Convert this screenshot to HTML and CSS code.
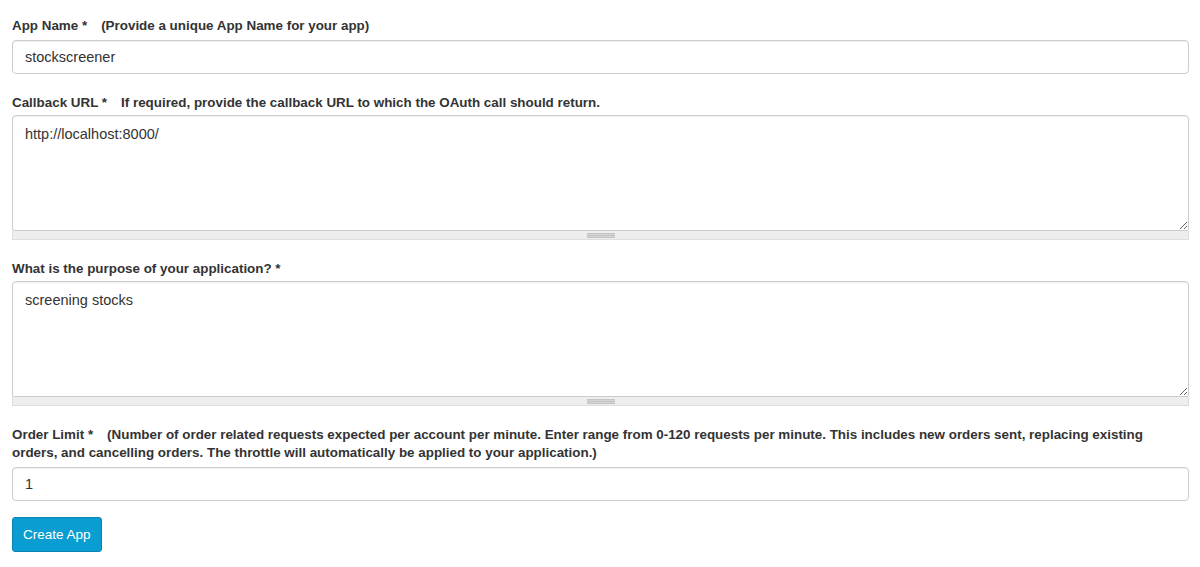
FILE: index.html
```html
<!DOCTYPE html>
<html lang="en">
<head>
<meta charset="utf-8">
<title>Create App</title>
<link rel="stylesheet" href="styles.css">
</head>
<body>
<form class="app-form">
  <div class="field">
    <label class="field-label" for="app-name">App Name *<span class="hint">(Provide a unique App Name for your app)</span></label>
    <input class="text-input" id="app-name" type="text" value="stockscreener">
  </div>
  <div class="field field-area">
    <label class="field-label" for="callback">Callback URL *<span class="hint">If required, provide the callback URL to which the OAuth call should return.</span></label>
    <div class="resizable">
      <textarea class="text-area" id="callback">http://localhost:8000/</textarea>
      <div class="grippie"><span class="grip"></span></div>
    </div>
  </div>
  <div class="field field-area">
    <label class="field-label" for="purpose">What is the purpose of your application? *</label>
    <div class="resizable">
      <textarea class="text-area" id="purpose">screening stocks</textarea>
      <div class="grippie"><span class="grip"></span></div>
    </div>
  </div>
  <div class="field">
    <label class="field-label" for="order-limit">Order Limit *<span class="hint">(Number of order related requests expected per account per minute. Enter range from 0-120 requests per minute. This includes new orders sent, replacing existing orders, and cancelling orders. The throttle will automatically be applied to your application.)</span></label>
    <input class="text-input" id="order-limit" type="text" value="1">
  </div>
  <div class="actions">
    <button class="btn-primary" type="button">Create App</button>
  </div>
</form>
</body>
</html>
```

FILE: styles.css
```css
html, body {
  margin: 0;
  padding: 0;
  background: #ffffff;
}

body {
  font-family: "Liberation Sans", Arial, Helvetica, sans-serif;
  color: #333333;
}

.app-form {
  padding: 15px 11px 0 12px;
  display: flex;
  flex-direction: column;
  gap: 18px;
}

.field {
  display: flex;
  flex-direction: column;
  gap: 5px;
}

.field-area {
  gap: 3px;
}

.field-label {
  display: block;
  padding-top: 2px;
  font-size: 13.4px;
  font-weight: bold;
  line-height: 18px;
  color: #333333;
}

.hint {
  margin-left: 14px;
}

.text-input {
  box-sizing: border-box;
  width: 100%;
  height: 34px;
  margin: 0;
  padding: 0 12px;
  font-family: "Liberation Sans", Arial, Helvetica, sans-serif;
  font-size: 14.5px;
  color: #333333;
  background: #ffffff;
  border: 1px solid #cccccc;
  border-radius: 4px;
  box-shadow: inset 0 1px 1px rgba(0, 0, 0, 0.06);
  outline: none;
}

.resizable {
  display: flex;
  flex-direction: column;
}

.text-area {
  box-sizing: border-box;
  display: block;
  width: 100%;
  height: 116px;
  margin: 0;
  padding: 8px 12px;
  font-family: "Liberation Sans", Arial, Helvetica, sans-serif;
  font-size: 14.5px;
  line-height: 20px;
  color: #333333;
  background: #ffffff;
  border: 1px solid #cccccc;
  border-radius: 4px 4px 2px 2px;
  box-shadow: inset 0 1px 1px rgba(0, 0, 0, 0.06);
  resize: vertical;
  outline: none;
}

.grippie {
  box-sizing: border-box;
  height: 9px;
  background: #eeeeee;
  border: 1px solid #dddddd;
  border-top: 0;
  display: flex;
  justify-content: center;
  align-items: center;
}

.grip {
  display: block;
  width: 28px;
  height: 5px;
  background: repeating-linear-gradient(to bottom, #c4c4c4 0, #c4c4c4 1px, #d4d4d4 1px, #d4d4d4 2px);
}

.actions {
  display: flex;
  margin-top: -2px;
}

.btn-primary {
  box-sizing: border-box;
  height: 35px;
  padding: 0 10px;
  font-family: "Liberation Sans", Arial, Helvetica, sans-serif;
  font-size: 13.5px;
  color: #ffffff;
  background: #0a9dd1;
  border: 1px solid #0a84b4;
  border-radius: 3px;
  cursor: pointer;
}
```
